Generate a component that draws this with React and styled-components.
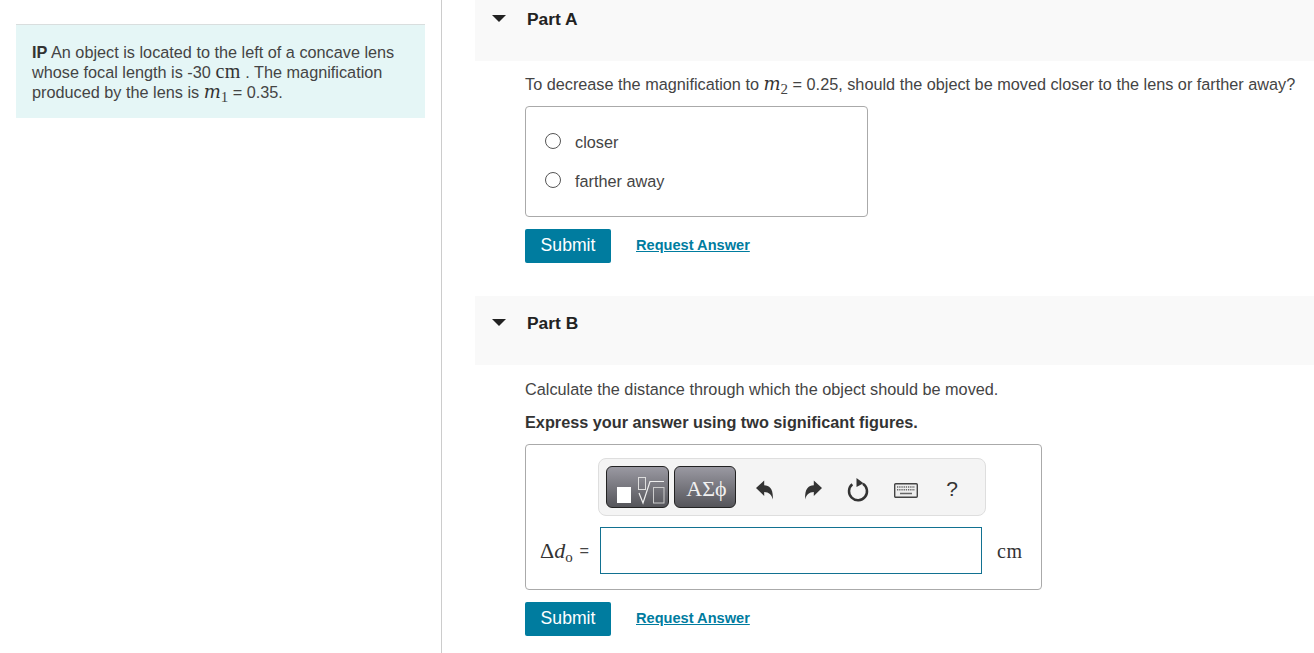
import React from "react";
import styled, { createGlobalStyle } from "styled-components";

const GlobalStyle = createGlobalStyle`
  html, body {
    margin: 0;
    padding: 0;
    background: #fff;
    height: 653px;
    overflow: hidden;
  }
  body {
    font-family: "Liberation Sans", Arial, sans-serif;
    font-size: 16.25px;
    color: #333;
  }
`;

function UndoIcon({ flip }) {
  return (
    <ToolSvg width="18" height="20" viewBox="0 0 18 20" $flip={flip}>
      <path d="M0 8 8.200.5V5.200c5.400.2 9.300 3.600 8.600 14.300C15.600 14.500 13 12.300 8.200 12V16z" fill="#333" />
    </ToolSvg>
  );
}

function ResetIcon() {
  return (
    <ToolSvg width="24" height="26" viewBox="0 0 24 26">
      <path d="M6.300 7.300a9 9 0 1 0 10.600-.6" fill="none" stroke="#333" strokeWidth="2.500" />
      <path d="M10.500 1 17.500 6.300 10.500 10z" fill="#333" />
    </ToolSvg>
  );
}

function KeyboardIcon() {
  return (
    <ToolSvg width="24" height="15" viewBox="0 0 24 15">
      <rect x=".7" y=".7" width="22.600" height="13.600" rx="1" fill="#eee" stroke="#444" strokeWidth="1.400" />
      <path d="M3 4h18M3 6.800h18" stroke="#666" strokeWidth="1.500" strokeDasharray="1.300 .9" />
      <path d="M6 10.500h12" stroke="#666" strokeWidth="1.500" />
    </ToolSvg>
  );
}

function TemplatesIcon() {
  return (
    <svg width="61" height="40" viewBox="0 0 61 40">
      <rect x="10" y="20" width="14" height="16" fill="#fff" />
      <rect x="31.500" y="10.500" width="7" height="12" fill="none" stroke="#ddd" strokeWidth="1" />
      <path d="M32 26l4 10L43 14.500h14" fill="none" stroke="#eee" strokeWidth="1.200" />
      <rect x="46.500" y="20.500" width="10.500" height="15.500" fill="none" stroke="#ccc" strokeWidth="1" />
    </svg>
  );
}

function SubmitRow() {
  return (
    <Actions>
      <SubmitButton>Submit</SubmitButton>
      <AnswerLink href="#">Request Answer</AnswerLink>
    </Actions>
  );
}

function PartHeader({ children }) {
  return (
    <Header>
      <Caret />
      <PartTitle>{children}</PartTitle>
    </Header>
  );
}

export default function App() {
  return (
    <Page>
      <GlobalStyle />
      <Sidebar>
        <Intro>
          <b>IP</b> An object is located to the left of a concave lens whose focal length is -30{" "}
          <MathUnit>cm</MathUnit> . The magnification produced by the lens is{" "}
          <MathVar>m</MathVar><MathSub>1</MathSub> = 0.35.
        </Intro>
      </Sidebar>
      <Main>
        <PartHeader>Part A</PartHeader>
        <PartBody $top={13}>
          <Question $gap={12}>
            To decrease the magnification to <MathVar>m</MathVar><MathSub>2</MathSub> = 0.25, should the object be moved closer to the lens or farther away?
          </Question>
          <ChoiceBox>
            <Choice>
              <Radio />
              closer
            </Choice>
            <Choice>
              <Radio />
              farther away
            </Choice>
          </ChoiceBox>
          <SubmitRow />
        </PartBody>
        <PartHeader>Part B</PartHeader>
        <PartBody $top={14}>
          <Question $gap={13}>Calculate the distance through which the object should be moved.</Question>
          <Directive>Express your answer using two significant figures.</Directive>
          <AnswerBox>
            <Toolbar>
              <DarkButton $width={63}><TemplatesIcon /></DarkButton>
              <DarkButton $width={62}><Greek>ΑΣϕ</Greek></DarkButton>
              <ToolSlot $width={48}><UndoIcon /></ToolSlot>
              <ToolSlot $width={48}><UndoIcon flip /></ToolSlot>
              <ToolSlot $width={42}><ResetIcon /></ToolSlot>
              <ToolSlot $width={54}><KeyboardIcon /></ToolSlot>
              <ToolSlot $width={38}><Help>?</Help></ToolSlot>
            </Toolbar>
            <InputRow>
              <Label>
                <MathLabel>Δ<i>d</i><MathSub>o</MathSub></MathLabel>
                <span>=</span>
              </Label>
              <AnswerInput />
              <MathUnit>cm</MathUnit>
            </InputRow>
          </AnswerBox>
          <SubmitRow />
        </PartBody>
      </Main>
    </Page>
  );
}

const Page = styled.div`
  display: flex;
  width: 1314px;
  height: 653px;
  overflow: hidden;
`;

const Sidebar = styled.aside`
  box-sizing: border-box;
  flex: 0 0 442px;
  height: 653px;
  padding: 24px 16px 0;
  border-right: 1px solid #ccc;
`;

const Intro = styled.div`
  box-sizing: border-box;
  height: 94px;
  padding: 17px 16px 0;
  background: #e5f6f6;
  border-top: 1px solid #d9dede;
  line-height: 20px;
  color: #444;

  b {
    color: #333;
  }
`;

const Main = styled.main`
  flex: 1;
  min-width: 0;
  margin-top: -8px;
  padding-left: 33px;
`;

const Header = styled.div`
  display: flex;
  align-items: flex-start;
  box-sizing: border-box;
  height: 69px;
  padding: 17px 0 0 17px;
  background: #f9f9f9;
`;

const Caret = styled.span`
  width: 0;
  height: 0;
  margin: 6px 21px 0 0;
  border-left: 7px solid transparent;
  border-right: 7px solid transparent;
  border-top: 7px solid #222;
`;

const PartTitle = styled.span`
  font-weight: bold;
  font-size: 17.4px;
  line-height: 20px;
  color: #222;
`;

const PartBody = styled.section`
  padding: ${(p) => p.$top}px 0 33px 50px;
`;

const Question = styled.p`
  margin: 0 0 ${(p) => p.$gap}px;
  line-height: 20px;
  white-space: nowrap;
  color: #444;
`;

const Directive = styled.p`
  margin: 0 0 12px;
  line-height: 20px;
  font-weight: bold;
  color: #333;
`;

const MathVar = styled.i`
  font-family: "DejaVu Serif", serif;
  font-size: 18px;
  line-height: 0;
  color: #333;
`;

const MathSub = styled.sub`
  font-family: "Liberation Serif", serif;
  font-size: 15px;
  line-height: 0;
  font-style: normal;
  vertical-align: -4px;
`;

const MathUnit = styled.span`
  font-family: "Liberation Serif", serif;
  font-size: 20px;
  line-height: 0;
  letter-spacing: 0.5px;
  color: #333;
`;

const ChoiceBox = styled.div`
  box-sizing: border-box;
  width: 343px;
  height: 111px;
  padding: 16px 19px 0;
  border: 1px solid #aaa;
  border-radius: 4px;
`;

const Choice = styled.label`
  display: flex;
  align-items: center;
  height: 39px;
  color: #444;
`;

const Radio = styled.span`
  box-sizing: border-box;
  width: 16px;
  height: 16px;
  margin-right: 14px;
  margin-top: -3px;
  border: 1.5px solid #555;
  border-radius: 50%;
  background: #fff;
`;

const Actions = styled.div`
  display: flex;
  align-items: center;
  margin-top: 12px;
`;

const SubmitButton = styled.button`
  width: 86px;
  height: 34px;
  padding: 0 0 2px;
  border: 0;
  border-radius: 2px;
  background: #007c9f;
  color: #fff;
  font-family: inherit;
  font-size: 17.6px;
`;

const AnswerLink = styled.a`
  margin: -2px 0 0 25px;
  color: #007c9f;
  font-size: 14.6px;
  font-weight: bold;
  text-decoration: underline;
`;

const AnswerBox = styled.div`
  box-sizing: border-box;
  width: 517px;
  height: 146px;
  padding: 13px 0 0 14px;
  border: 1px solid #aaa;
  border-radius: 4px;
`;

const Toolbar = styled.div`
  box-sizing: border-box;
  display: flex;
  align-items: center;
  width: 388px;
  height: 58px;
  margin-left: 58px;
  padding: 0 7px;
  background: #f4f4f4;
  border: 1px solid #dedede;
  border-radius: 8px;
`;

const DarkButton = styled.div`
  box-sizing: border-box;
  display: flex;
  align-items: center;
  justify-content: center;
  flex: 0 0 ${(p) => p.$width}px;
  height: 42px;
  margin-right: 5px;
  border: 1px solid #222;
  border-radius: 6px;
  background: linear-gradient(#9a99a2, #55555a);
`;

const Greek = styled.span`
  padding: 4px 0 0 3px;
  font-family: "Liberation Serif", serif;
  font-size: 22px;
  color: #f0f0f0;
`;

const ToolSlot = styled.div`
  display: flex;
  justify-content: center;
  align-items: center;
  flex: 0 0 ${(p) => p.$width}px;
  padding-top: 6px;
`;

const ToolSvg = styled.svg`
  transform: ${(p) => (p.$flip ? "scaleX(-1)" : "none")};
`;

const Help = styled.span`
  margin-top: -3px;
  font-size: 21px;
  color: #333;
`;

const InputRow = styled.div`
  display: flex;
  align-items: center;
  margin-top: 11px;
`;

const Label = styled.div`
  box-sizing: border-box;
  display: flex;
  justify-content: space-between;
  flex: 0 0 60px;
  padding-right: 11px;
  color: #444;
`;

const MathLabel = styled.span`
  font-family: "Liberation Serif", serif;
  font-size: 22px;
  line-height: 20px;
  color: #333;
`;

const AnswerInput = styled.input`
  box-sizing: border-box;
  width: 382px;
  height: 47px;
  margin-right: 15px;
  border: 1px solid #127191;
  outline: none;
`;
